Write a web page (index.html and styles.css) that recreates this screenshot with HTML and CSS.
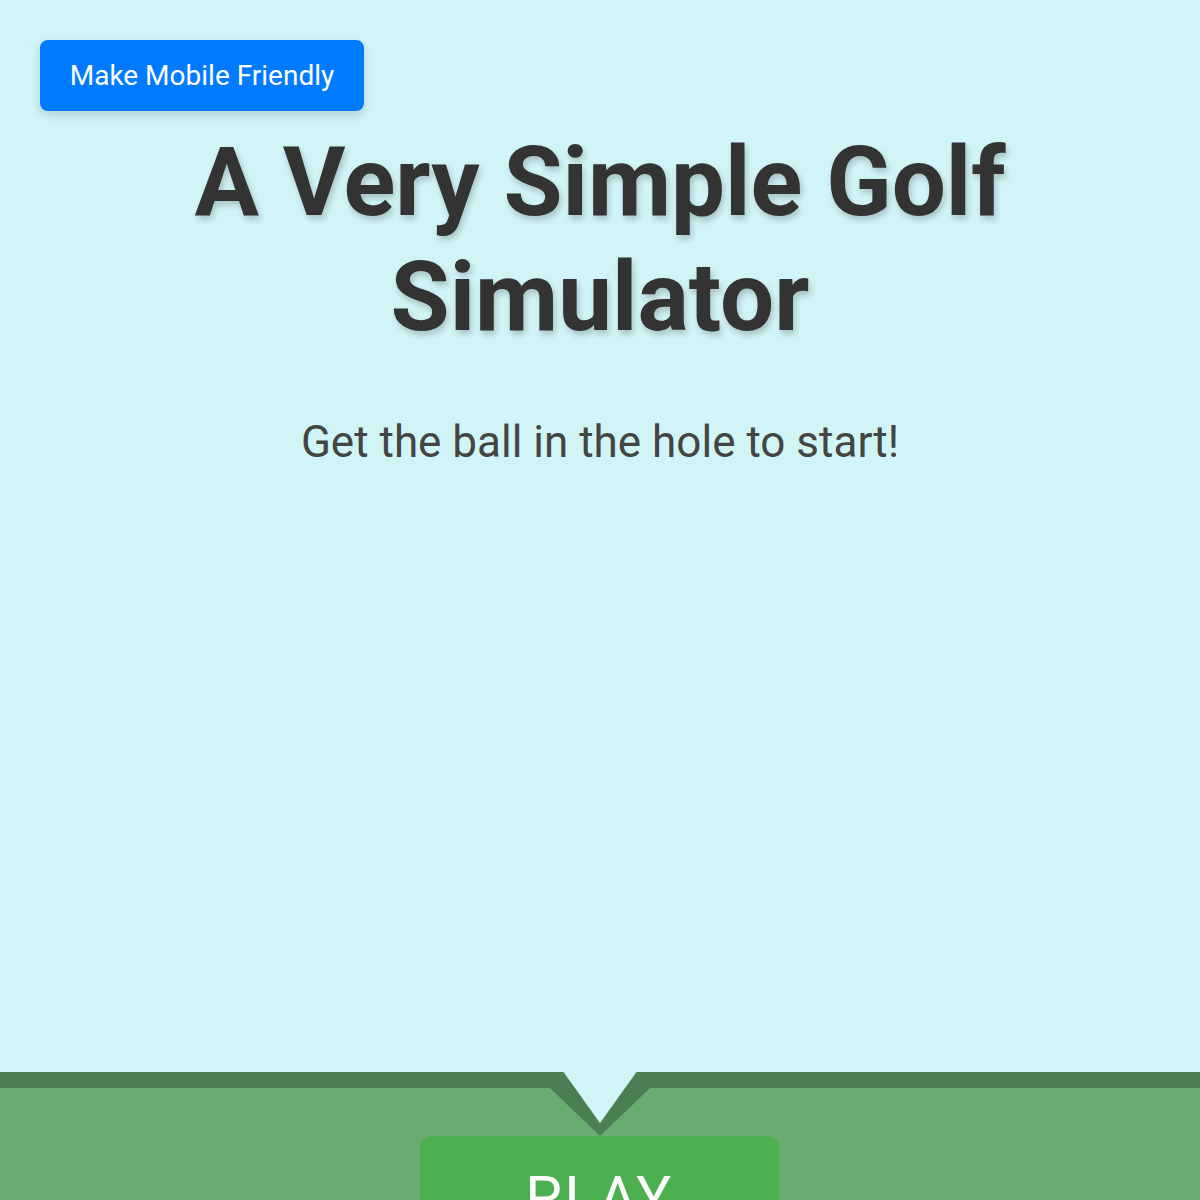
FILE: index.html
```html
<!DOCTYPE html>
<html>
<head>
<meta charset="utf-8">
<link rel="stylesheet" href="styles.css">
</head>
<body>
<div class="page">
  <header class="top">
    <button class="mobile-btn">Make Mobile Friendly</button>
    <h1 class="title">A Very Simple Golf Simulator</h1>
    <p class="subtitle">Get the ball in the hole to start!</p>
  </header>
  <section class="ground">
    <svg class="ground-art" width="1200" height="128" viewBox="0 0 1200 128" preserveAspectRatio="none">
      <rect x="0" y="0" width="1200" height="128" fill="#6aab72"/>
      <polygon points="0,0 563,0 600,51 637,0 1200,0 1200,16 650,16 600,64 550,16 0,16" fill="#4a7f54"/>
      <polygon points="563,-1 637,-1 600,51" fill="#d1f4f7"/>
    </svg>
    <button class="play-btn">PLAY</button>
  </section>
</div>
</body>
</html>
```
FILE: styles.css
```css
* { box-sizing: border-box; }
html, body {
  margin: 0;
  padding: 0;
  height: 100%;
  overflow: hidden;
}
body {
  background: #d1f4f7;
  font-family: Roboto, "Liberation Sans", sans-serif;
}
.page {
  min-height: 100vh;
  display: flex;
  flex-direction: column;
}
.top {
  padding: 40px 40px 0;
  display: flex;
  flex-direction: column;
  align-items: center;
}
.mobile-btn {
  align-self: flex-start;
  background: #007bff;
  color: #fff;
  border: none;
  border-radius: 8px;
  width: 324px;
  height: 71px;
  font-family: Roboto, "Liberation Sans", sans-serif;
  font-size: 28px;
  padding: 0;
  box-shadow: 0 4px 10px rgba(0, 0, 0, 0.15);
}
.title {
  margin: 14px 0 0;
  font-size: 96px;
  line-height: 115px;
  font-weight: 700;
  color: #333;
  text-align: center;
  width: 900px;
  text-shadow: 2px 4px 6px rgba(0, 0, 0, 0.2);
}
.subtitle {
  margin: 61px 0 0;
  font-size: 44px;
  line-height: 53px;
  color: #444;
  text-align: center;
}
.ground {
  margin-top: auto;
  height: 128px;
  position: relative;
  display: flex;
  justify-content: center;
  align-items: flex-start;
}
.ground-art {
  position: absolute;
  left: 0;
  top: 0;
  display: block;
}
.play-btn {
  position: relative;
  margin-top: 64px;
  margin-left: -1px;
  width: 359px;
  height: 120px;
  background: #4caf50;
  border: none;
  border-radius: 12px;
  color: #fff;
  font-family: Roboto, "Liberation Sans", sans-serif;
  font-size: 58px;
  letter-spacing: 2.5px;
  padding: 27px 0 0;
  display: flex;
  justify-content: center;
  align-items: flex-start;
}
```
